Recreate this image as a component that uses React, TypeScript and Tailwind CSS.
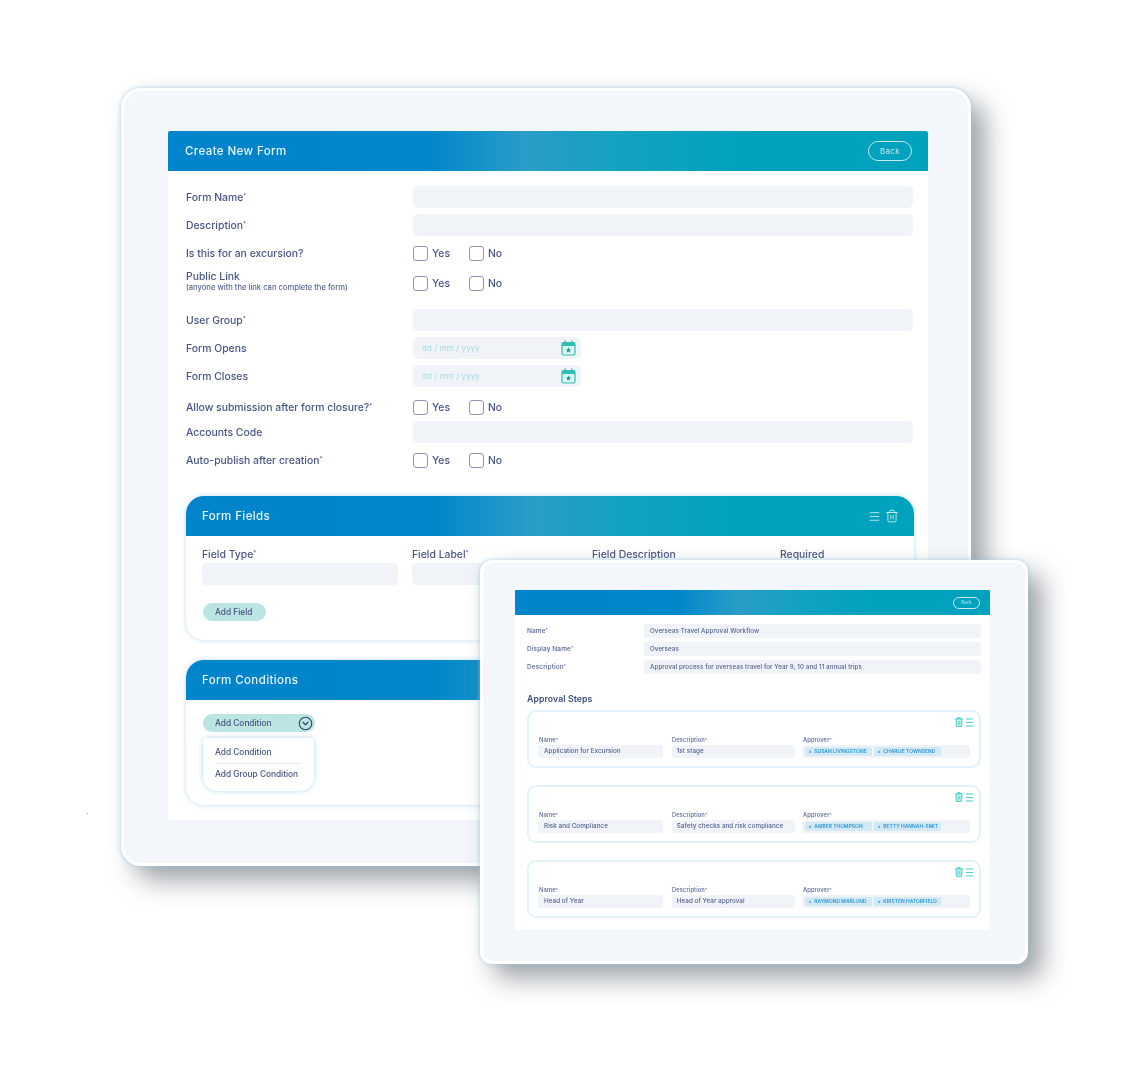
import { CircleChevronDown, Menu, Trash2 } from 'lucide-react'
import type { ReactNode } from 'react'

const font = "font-['Inter','Liberation_Sans',sans-serif]"
const headerBg =
  'bg-[linear-gradient(90deg,#0084cb_0%,#0086cb_34%,#2a9dc8_47%,#12a2c2_60%,#00a2bd_76%,#00a2bd_100%)]'
const winShadow = 'shadow-[0_0_4px_rgba(150,200,225,0.8),14px_14px_26px_rgba(60,70,80,0.5)]'

function Label({ children }: { children: ReactNode }) {
  return <span className="block text-[10.4px] leading-[13px] font-medium text-[#4a5584] whitespace-nowrap">{children}</span>
}

function Req() {
  return <sup className="text-[6px] top-[-3px]">*</sup>
}

function Row({ label, className, children }: { label: ReactNode; className?: string; children: ReactNode }) {
  return (
    <div className={`flex items-center ${className ?? ''}`}>
      <div className="w-[227px] shrink-0">{label}</div>
      {children}
    </div>
  )
}

function Input({ className }: { className?: string }) {
  return <div className={`h-[22px] rounded-[5px] bg-[#f0f4f9] ${className ?? 'flex-1'}`} />
}

function YesNo() {
  return (
    <div className="flex items-center h-[22px]">
      <span className="w-[15px] h-[15px] rounded-[3px] border border-[#8d96b8] bg-white" />
      <span className="ml-[4px] w-[37px]"><Label>Yes</Label></span>
      <span className="w-[15px] h-[15px] rounded-[3px] border border-[#8d96b8] bg-white" />
      <span className="ml-[4px]"><Label>No</Label></span>
    </div>
  )
}

function DateInput() {
  return (
    <div className="w-[168px] h-[22px] rounded-[5px] bg-[#f0f4f9] flex items-center justify-between pl-[9px] pr-[5px]">
      <span className="text-[8px] tracking-[0.1px] text-[#a5dbe3]">dd / mm / yyyy</span>
      <svg width="15" height="16" viewBox="0 0 15 16" fill="none">
        <rect x="1" y="2.5" width="13" height="12.5" rx="1.5" fill="#ddf3f1" stroke="#2dc0b4" strokeWidth="1.2" />
        <path d="M1 6h13V4a1.5 1.5 0 0 0-1.5-1.5h-10A1.5 1.5 0 0 0 1 4z" fill="#2dc0b4" />
        <path d="M4.2 1v3M10.8 1v3" stroke="#2dc0b4" strokeWidth="1.3" strokeLinecap="round" />
        <path d="M7.5 7.6l.8 1.6 1.8.2-1.3 1.2.3 1.8-1.6-.9-1.6.9.3-1.8-1.3-1.2 1.8-.2z" fill="#0f9f94" />
      </svg>
    </div>
  )
}

function Card({ title, icons, className, children }: { title: string; icons?: boolean; className?: string; children: ReactNode }) {
  return (
    <div className={`rounded-[18px] bg-white shadow-[0_0_5px_rgba(130,190,230,0.55)] overflow-hidden ${className ?? ''}`}>
      <div className={`h-[40px] flex items-center justify-between pl-[16px] pr-[15px] ${headerBg}`}>
        <span className="pt-[2px] text-[11.5px] font-medium tracking-[0.4px] text-[#e8f5fb]">{title}</span>
        {icons && (
          <div className="flex items-center gap-[4px] text-[#c8eef2]">
            <Menu size={13} strokeWidth={1.6} />
            <Trash2 size={14} strokeWidth={1.6} />
          </div>
        )}
      </div>
      {children}
    </div>
  )
}

function FieldCol({ label, req, className, input }: { label: string; req?: boolean; className: string; input?: boolean }) {
  return (
    <div className={className}>
      <div className="h-[18px] flex items-center">
        <Label>{label}{req && <Req />}</Label>
      </div>
      {input && <div className="h-[22px] rounded-[4px] bg-[#f0f4f9]" />}
    </div>
  )
}

function SmallRow({ label, value }: { label: string; value: string }) {
  return (
    <div className="flex items-center h-[14px]">
      <div className="w-[117px] pt-[1px] text-[6.5px] font-medium text-[#5a6590] tracking-[0.1px]">{label}<sup className="text-[4px] top-[-2px]">*</sup></div>
      <div className="flex-1 h-[14px] rounded-[3px] bg-[#f0f4f9] flex items-center pl-[6px] text-[6.2px] font-medium tracking-[0.1px] text-[#54608a]">
        {value}
      </div>
    </div>
  )
}

function StepIcons() {
  return (
    <div className="h-[24px] flex items-start justify-end pt-[5px] mr-[-3px] gap-[3px]">
      <svg width="8" height="10" viewBox="0 0 8 10" fill="none" stroke="#4dd0c8" strokeWidth="1">
        <path d="M0.3 2h7.4M2.8 2V.6h2.4V2" />
        <path d="M1 2l.4 7.4h5.2L7 2z" fill="#c9f0ec" />
        <path d="M3.2 4v3.6M4.8 4v3.6" strokeWidth="0.8" />
      </svg>
      <svg width="7" height="9" viewBox="0 0 7 9" fill="none" stroke="#4dd0c8" strokeWidth="1.1" className="mt-[1px]">
        <path d="M0 1h7M0 4.5h7M0 8h7" />
      </svg>
    </div>
  )
}

function Chip({ text }: { text: string }) {
  return (
    <span className="w-[67px] h-[9px] rounded-[1px] bg-[#d3e9f6] flex items-center pl-[3px] text-[4.9px] leading-none font-semibold whitespace-nowrap text-[#2a97d2]">
      ×&nbsp;&nbsp;{text}
    </span>
  )
}

function Step({ name, description, approvers }: { name: string; description: string; approvers: [string, string] }) {
  return (
    <div className="h-[58px] rounded-[9px] border-2 border-[#e4f2fb] bg-white px-[9px]">
      <StepIcons />
      <div className="flex text-[5.8px] font-medium text-[#5a6590] leading-[8px] tracking-[0.1px]">
        <span className="w-[134px] pl-[1px]">Name<sup className="text-[4px] top-[-1px]">*</sup></span>
        <span className="w-[131px] pl-[1px] ml-[-1px]">Description<sup className="text-[4px] top-[-1px]">*</sup></span>
        <span className="pl-[1px]">Approver<sup className="text-[4px] top-[-1px]">*</sup></span>
      </div>
      <div className="flex mt-[1px] text-[6.3px] font-medium text-[#54608a] tracking-[0.05px]">
        <div className="w-[125px] h-[13px] rounded-[3px] bg-[#f0f4f9] flex items-center pl-[6px]">{name}</div>
        <div className="w-[124px] h-[13px] ml-[9px] rounded-[3px] bg-[#f0f4f9] flex items-center pl-[5px]">{description}</div>
        <div className="w-[168px] h-[13px] ml-[7px] rounded-[3px] bg-[#f0f4f9] flex items-center pl-[3px] gap-[2px]">
          <Chip text={approvers[0]} />
          <Chip text={approvers[1]} />
        </div>
      </div>
    </div>
  )
}

export default function App() {
  return (
    <div className={`relative w-[1130px] h-[1080px] bg-white overflow-hidden blur-[0.55px] ${font}`}>
      <span className="absolute left-[87px] top-[813px] w-px h-px bg-[#9aa]" />

      {/* Create form window */}
      <div className="pl-[121px] pt-[88px]">
        <div className={`w-[850px] h-[778px] rounded-[20px] border-[3px] border-white bg-[#f3f7fc] pl-[44px] pt-[40px] ${winShadow}`}>
          <div className="w-[760px] bg-white">
            <div className={`h-[40px] rounded-t-[2px] flex items-center justify-between pl-[17px] pr-[16px] ${headerBg}`}>
              <span className="pt-[2px] text-[11.5px] font-medium tracking-[0.4px] text-[#e8f5fb]">Create New Form</span>
              <span className="w-[44px] h-[20px] rounded-full border border-[#c4e8ee] flex items-center justify-center text-[8px] tracking-[0.3px] text-[#c4e8ee]">
                Back
              </span>
            </div>

            <div className="pt-[15px] pl-[18px] pr-[15px] pb-[15px]">
              <Row label={<Label>Form Name<Req /></Label>}><Input /></Row>
              <Row className="mt-[6px]" label={<Label>Description<Req /></Label>}><Input /></Row>
              <Row className="mt-[6px]" label={<Label>Is this for an excursion?</Label>}><YesNo /></Row>
              <Row
                className="mt-[6px] h-[26px]"
                label={
                  <div className="flex flex-col h-[26px] gap-[1px] mt-[-1px]">
                    <Label>Public Link</Label>
                    <span className="text-[7.6px] leading-[8px] font-medium text-[#5a6590] whitespace-nowrap">(anyone with the link can complete the form)</span>
                  </div>
                }
              >
                <YesNo />
              </Row>
              <Row className="mt-[13px]" label={<Label>User Group<Req /></Label>}><Input /></Row>
              <Row className="mt-[6px]" label={<Label>Form Opens</Label>}><DateInput /></Row>
              <Row className="mt-[6px]" label={<Label>Form Closes</Label>}><DateInput /></Row>
              <Row className="mt-[9px]" label={<Label>Allow submission after form closure?<Req /></Label>}><YesNo /></Row>
              <Row className="mt-[3px]" label={<Label>Accounts Code</Label>}><Input /></Row>
              <Row className="mt-[6px]" label={<Label>Auto-publish after creation<Req /></Label>}><YesNo /></Row>

              <Card title="Form Fields" icons className="mt-[25px] w-[728px] h-[144px]">
                <div className="flex pl-[16px] pt-[9px]">
                  <FieldCol label="Field Type" req className="w-[196px]" input />
                  <FieldCol label="Field Label" req className="ml-[14px] w-[166px]" input />
                  <FieldCol label="Field Description" className="ml-[14px] w-[174px]" />
                  <FieldCol label="Required" className="ml-[14px] w-[60px]" />
                </div>
                <div className="ml-[17px] mt-[18px] w-[63px] h-[18px] rounded-full bg-[#bce4e3] flex items-center pl-[12px] text-[8.3px] font-medium text-[#45507f]">
                  Add Field
                </div>
              </Card>

              <Card title="Form Conditions" className="mt-[20px] w-[728px] h-[145px]">
                <div className="ml-[17px] mt-[14px] w-[112px] h-[18px] rounded-full bg-[#bce4e3] flex items-center justify-between pl-[12px] pr-[2px] text-[8.3px] font-medium text-[#45507f]">
                  Add Condition
                  <CircleChevronDown size={15} strokeWidth={1.8} className="text-[#2f4266]" />
                </div>
                <div className="ml-[17px] mt-[6px] w-[111px] h-[53px] rounded-b-[14px] rounded-t-[4px] bg-white shadow-[0_0_5px_rgba(130,190,230,0.6)] px-[12px] pt-[9px] text-[8.3px] font-medium text-[#45507f]">
                  <div className="h-[11px] leading-[11px]">Add Condition</div>
                  <div className="mt-[5px] mb-[5px] h-px w-[86px] bg-[#e2eef6]" />
                  <div className="h-[11px] leading-[11px] whitespace-nowrap">Add Group Condition</div>
                </div>
              </Card>
            </div>
          </div>
        </div>
      </div>

      {/* Approval workflow window, sits over the first one */}
      <div className={`absolute left-[480px] top-[560px] w-[548px] h-[404px] rounded-[12px] border-[3px] border-white bg-[#f3f7fc] pl-[32px] pt-[27px] ${winShadow}`}>
        <div className="w-[475px] h-[340px] bg-white">
          <div className={`h-[25px] rounded-t-[1px] flex items-center justify-end pr-[10px] ${headerBg}`}>
            <span className="w-[27px] h-[12px] rounded-full border border-[#c4e8ee] flex items-center justify-center pt-[1px] text-[4.5px] text-[#c4e8ee]">
              Back
            </span>
          </div>
          <div className="pl-[12px] pr-[9px] pt-[9px]">
            <div className="flex flex-col gap-[4px]">
              <SmallRow label="Name" value="Overseas Travel Approval Workflow" />
              <SmallRow label="Display Name" value="Overseas" />
              <SmallRow label="Description" value="Approval process for overseas travel for Year 9, 10 and 11 annual trips" />
            </div>
            <div className="mt-[19px] h-[12px] leading-[12px] text-[8.7px] font-semibold tracking-[0.1px] text-[#3f4c7c]">Approval Steps</div>
            <div className="mt-[5px] flex flex-col gap-[17px]">
              <Step name="Application for Excursion" description="1st stage" approvers={['SUSAN LIVINGSTONE', 'CHARLIE TOWNSEND']} />
              <Step name="Risk and Compliance" description="Safety checks and risk compliance" approvers={['AMBER THOMPSON', 'BETTY HANNAH-SMIT']} />
              <Step name="Head of Year" description="Head of Year approval" approvers={['RAYMOND MARLOND', 'KRISTEN HATORFIELD']} />
            </div>
          </div>
        </div>
      </div>
    </div>
  )
}
